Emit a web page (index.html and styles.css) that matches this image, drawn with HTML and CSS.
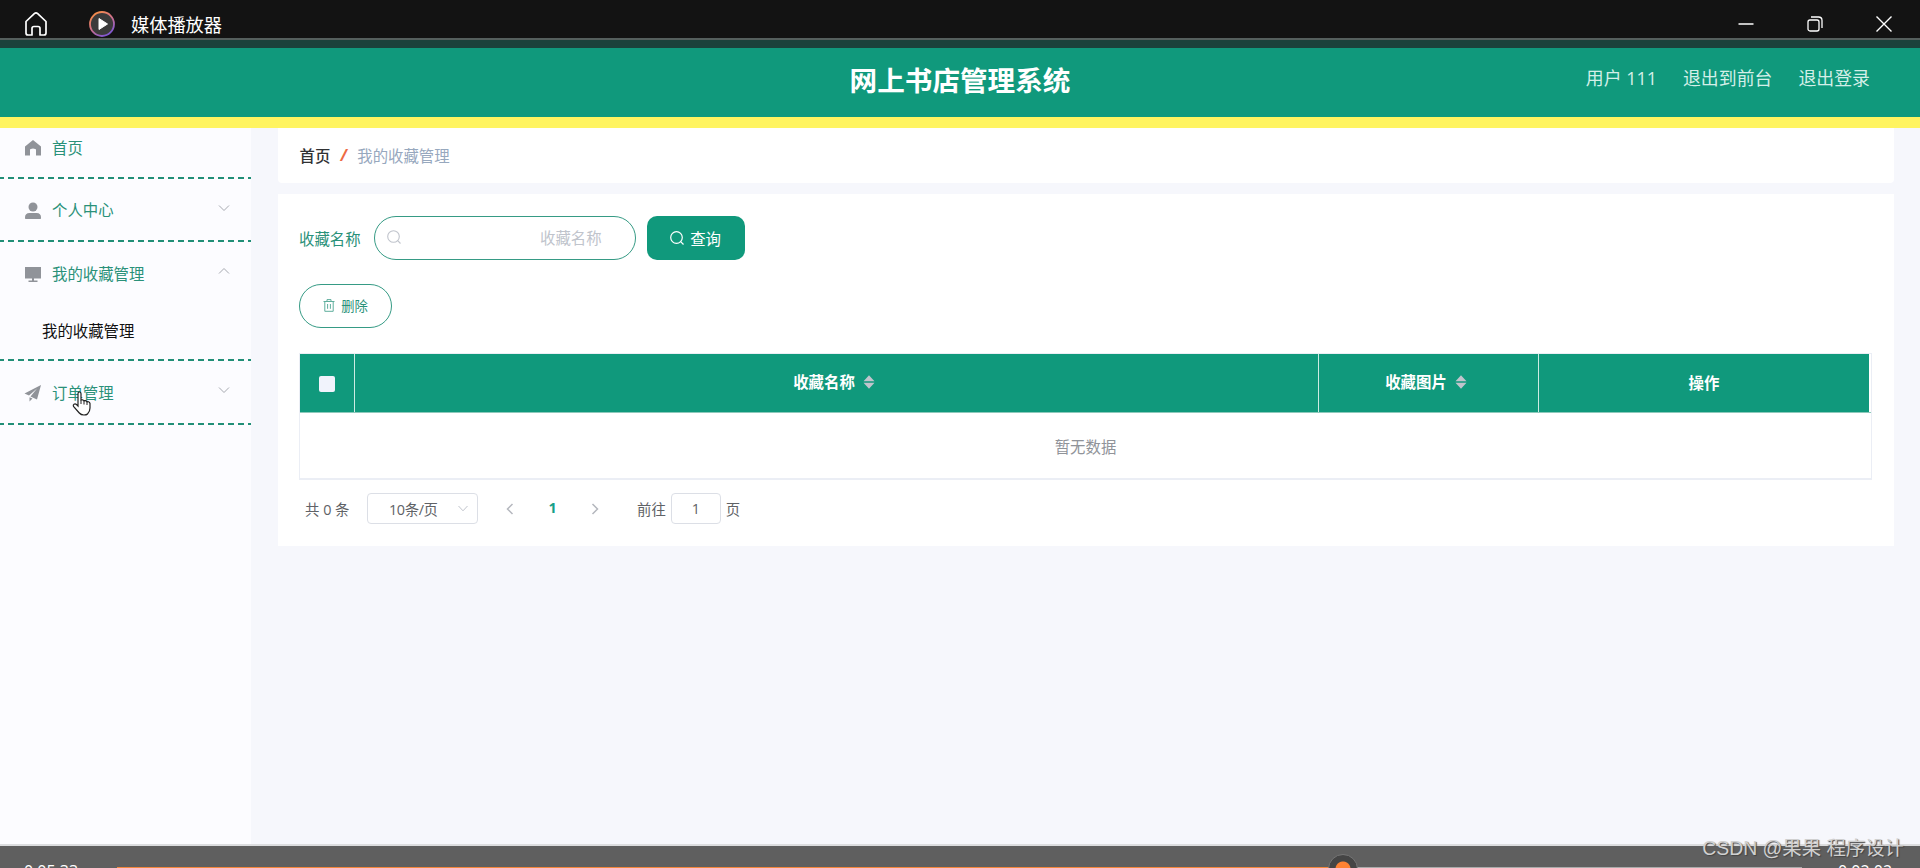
FILE: index.html
```
<!DOCTYPE html>
<html lang="zh-CN">
<head>
    <meta charset="UTF-8">
    <meta name="viewport" content="width=device-width, initial-scale=1.0">
    <title>网上书店管理系统</title>
    <link rel="stylesheet" href="styles.css">
</head>
<body>
    <div class="player">
        <div class="titlebar">
            <svg class="home" width="24" height="26" viewBox="0 0 24 26" fill="none" stroke="#fff" stroke-width="1.7" stroke-linejoin="round"><path d="M2 10.5 10.3 2.7Q12 1.200 13.700 2.700L22 10.500V22Q22 24 20 24H16V17.500Q16 15.500 14 15.500H10Q8 15.500 8 17.500V24H4Q2 24 2 22Z"/></svg>
            <svg class="app" width="26" height="26" viewBox="0 0 26 26">
                <defs>
                    <linearGradient id="ring" x1="0" y1="0" x2="0.600" y2="1"><stop offset="0" stop-color="#ff9436"/><stop offset="0.500" stop-color="#d87583"/><stop offset="1" stop-color="#8358d0"/></linearGradient>
                </defs>
                <circle cx="13" cy="13" r="12" fill="#3b3b3b" stroke="url(#ring)" stroke-width="1.800"/>
                <path d="M10 7.500V18.500L18.500 13Z" fill="#fff" stroke="#fff" stroke-linejoin="round"/>
            </svg>
            <span class="name">媒体播放器</span>
            <div class="win_btns">
                <svg width="16" height="16" viewBox="0 0 16 16"><path d="M0.500 8H15.500" stroke="#fff" stroke-width="1.500"/></svg>
                <svg width="16" height="16" viewBox="0 0 16 16" fill="none" stroke="#fff" stroke-width="1.300"><rect x="1" y="4" width="11" height="11" rx="2"/><path d="M4 1H11.500Q15 1 15 4.500V12"/></svg>
                <svg width="16" height="16" viewBox="0 0 16 16"><path d="M0.500 0.500 15.500 15.500M15.500 0.500 0.500 15.500" stroke="#fff" stroke-width="1.400"/></svg>
            </div>
        </div>

        <header class="header">
            <h1>网上书店管理系统</h1>
            <div class="user">
                <span>用户 111</span>
                <span>退出到前台</span>
                <span>退出登录</span>
            </div>
        </header>

        <div class="container">
            <ul class="menu">
                <li class="first">
                    <svg class="icon" width="18" height="18" viewBox="0 0 18 18"><path d="M9 1 17 7.500V16.500H12V11Q12 9.500 9 9.500T6 11V16.500H1V7.500Z" fill="#909399"/></svg>
                    <span>首页</span>
                </li>
                <li>
                    <svg class="icon" width="18" height="18" viewBox="0 0 18 18" fill="#909399"><circle cx="9" cy="5" r="4.500"/><path d="M1.500 17Q1 17 1 15.500Q1 11 5.500 11H12.500Q17 11 17 15.500Q17 17 16.500 17Z"/></svg>
                    <span>个人中心</span>
                    <svg class="arrow" width="12" height="8" viewBox="0 0 12 8"><path d="M1 1.500 6 6.500 11 1.500"/></svg>
                </li>
                <li class="opened">
                    <svg class="icon" width="18" height="18" viewBox="0 0 18 18" fill="#909399"><path d="M1 2H17V13.500H1ZM8 13.500H10V15.500H13.500V17H4.500V15.500H8Z"/></svg>
                    <span>我的收藏管理</span>
                    <svg class="arrow" width="12" height="8" viewBox="0 0 12 8"><path d="M1 6.500 6 1.500 11 6.500"/></svg>
                </li>
                <li class="sub">我的收藏管理</li>
                <li>
                    <svg class="icon" width="18" height="18" viewBox="0 0 18 18" fill="#909399"><path d="M17 1 0.500 9.500 5 11.500 13 4.500 6.500 12.500 13 15.500ZM5.500 13.200V17.500L8.500 14.500Z"/></svg>
                    <span>订单管理</span>
                    <svg class="arrow" width="12" height="8" viewBox="0 0 12 8"><path d="M1 1.500 6 6.500 11 1.500"/></svg>
                </li>
            </ul>

            <main class="main">
                <div class="breadcrumb">
                    <b>首页</b><i>/</i><span>我的收藏管理</span>
                </div>

                <div class="content">
                    <div class="search">
                        <label>收藏名称</label>
                        <div class="input">
                            <svg width="14" height="14" viewBox="0 0 14 14" fill="none" stroke="#c0c4cc" stroke-width="1.100"><circle cx="6.500" cy="6.500" r="5.800"/><path d="M10.700 10.700 13.500 13.500"/></svg>
                            <span>收藏名称</span>
                        </div>
                        <div class="btn_query">
                            <svg width="14" height="14" viewBox="0 0 14 14" fill="none" stroke="#fff" stroke-width="1.200"><circle cx="6.500" cy="6.500" r="5.800"/><path d="M10.700 10.700 13.500 13.500"/></svg>
                            <span>查询</span>
                        </div>
                    </div>

                    <div class="btn_del">
                        <svg width="12" height="13" viewBox="0 0 12 13" fill="none" stroke="#5fae9d"><path d="M0.500 2.500H11.500M4 2.500V0.600H8V2.500M1.800 2.500V12.300H10.200V2.500M4.600 5V9.800M7.400 5V9.800"/></svg>
                        <span>删除</span>
                    </div>

                    <div class="table">
                        <div class="thead">
                            <div class="th"><span class="checkbox"></span></div>
                            <div class="th sortable">收藏名称<svg width="12" height="14" viewBox="0 0 12 14" fill="#c0c4cc"><path d="M0.500 6.200 6 0.200 11.500 6.200ZM0.500 7.800 6 13.800 11.500 7.800Z"/></svg></div>
                            <div class="th sortable">收藏图片<svg width="12" height="14" viewBox="0 0 12 14" fill="#c0c4cc"><path d="M0.500 6.200 6 0.200 11.500 6.200ZM0.500 7.800 6 13.800 11.500 7.800Z"/></svg></div>
                            <div class="th">操作</div>
                        </div>
                        <div class="empty">暂无数据</div>
                    </div>

                    <div class="pagination">
                        <span class="total">共 0 条</span>
                        <div class="select">
                            <span>10条/页</span>
                            <svg width="10" height="7" viewBox="0 0 10 7" fill="none" stroke="#c0c4cc"><path d="M0.500 1 5 5.800 9.500 1"/></svg>
                        </div>
                        <svg class="prev" width="8" height="12" viewBox="0 0 8 12"><path d="M6.500 1 1.500 6 6.500 11"/></svg>
                        <b class="current">1</b>
                        <svg class="next" width="8" height="12" viewBox="0 0 8 12"><path d="M1.500 1 6.500 6 1.500 11"/></svg>
                        <span class="goto">前往</span>
                        <div class="page_input">1</div>
                        <span>页</span>
                    </div>
                </div>
            </main>
        </div>

        <!-- 播放进度条 -->
        <div class="controls">
            <span class="time">0:05:33</span>
            <div class="track"><div class="played"></div><div class="thumb"></div></div>
            <span class="time">0:02:02</span>
        </div>

        <svg class="cursor" width="20" height="26" viewBox="0 0 20 26"><path d="M6 14.500V2.800Q6 1 7.500 1T9 2.800V9.500Q9 8.600 10.500 8.800T12 10.300Q12.200 9.300 13.500 9.600T15 11.200Q15.300 10.300 16.500 10.700T18 12.500V17Q18 20.500 15.500 23Q14.500 24 12 24Q9 24 7.300 22L1.500 15.500Q0.800 14 2 13.200T4.500 13.500L6 15Z" fill="#fff" stroke="#222" stroke-width="1.200"/><path d="M9 9V13M12 10V13.500M15 11V14" stroke="#222"/></svg>
        <div class="watermark">CSDN @果果 程序设计</div>
    </div>
</body>
</html>
```
FILE: styles.css
```
* {
    margin: 0;
    padding: 0;
    box-sizing: border-box;
}
body {
    font-family: "Open Sans", "Noto Sans CJK SC", sans-serif;
    font-size: 15.4px;
    overflow: hidden;
}
li {
    list-style: none;
}
svg {
    display: block;
    flex-shrink: 0;
}
.player {
    position: relative;
    display: flex;
    flex-direction: column;
    width: 1920px;
    height: 868px;
    overflow: hidden;
    background: #f6f7fc;
}

/* 窗口标题栏 */
.titlebar {
    display: flex;
    align-items: center;
    height: 48px;
    padding: 0 28px 0 24px;
    border-bottom: 8px solid #1b423b;
    background: linear-gradient(#131313 38px, #555f5d 38px);
    color: #fff;
}
.titlebar .home {
    margin-top: 7px;
}
.titlebar .app {
    margin: 8px 16px 0 41px;
}
.titlebar .name {
    margin-top: 8px;
    font-size: 18.2px;
}
.win_btns {
    display: flex;
    gap: 53px;
    margin: 7px 0 0 auto;
}

/* 头部 */
.header {
    display: grid;
    grid-template-columns: 1fr auto 1fr;
    align-items: center;
    height: 80px;
    padding: 0 50px 8px;
    border-bottom: 11px solid #fff460;
    background: #10997c;
    color: #fff;
}
.header h1 {
    grid-column: 2;
    padding-top: 2px;
    font-size: 27.6px;
    line-height: 40px;
}
.user {
    display: flex;
    justify-content: flex-end;
    gap: 26px;
    padding-bottom: 3px;
    font-size: 17.9px;
    color: #d4efe8;
}

.container {
    display: flex;
    height: 716px;
}

/* 左侧菜单 */
.menu {
    width: 251px;
    background: #fcfcff;
    color: #2a9179;
}
.menu li {
    display: flex;
    align-items: center;
    height: 63px;
    padding: 0 21px 2px 24px;
    background: repeating-linear-gradient(90deg, #218f77 0 4px, transparent 4px 8px, #218f77 8px 10px) left bottom / 100% 2px no-repeat;
}
.menu li.first {
    height: 51px;
    padding-bottom: 13px;
}
.menu .icon {
    margin: 2px 10px 0 0;
}
.menu .arrow {
    margin: -4px 0 0 auto;
    fill: none;
    stroke: #a6a9b0;
}
.menu li.opened {
    height: 62px;
    padding-bottom: 0;
    background: none;
}
.menu li.sub {
    height: 57px;
    padding: 0 0 4px 42px;
    color: #111;
}
.menu li:last-child {
    height: 64px;
}

/* 右侧内容 */
.main {
    flex: 1;
    padding: 0 26px 0 26.500px;
}
.breadcrumb {
    display: flex;
    align-items: center;
    height: 55px;
    padding: 0 22px;
    border-radius: 0 0 4px 4px;
    background: #fff;
    color: #97a8be;
}
.breadcrumb b {
    color: #303133;
    font-weight: 500;
}
.breadcrumb i {
    width: 27px;
    text-align: center;
    font-weight: bold;
    color: #ee6a44;
}
.content {
    height: 352px;
    margin-top: 11px;
    padding: 22px 22px 0 21.500px;
    background: #fff;
}
.search {
    display: flex;
    align-items: center;
    color: #2a9179;
}
.input {
    display: flex;
    justify-content: space-between;
    align-items: center;
    width: 262px;
    height: 44px;
    margin: 0 11px 0 13px;
    padding: 0 33px 2px 12px;
    border: 1px solid #369b85;
    border-radius: 22px;
    color: #c0c4cc;
}
.btn_query {
    display: flex;
    justify-content: center;
    align-items: center;
    gap: 6px;
    width: 98px;
    height: 44px;
    border-radius: 10px;
    background: #10997c;
    color: #fff;
}
.btn_del {
    display: flex;
    justify-content: center;
    align-items: center;
    gap: 6px;
    width: 93px;
    height: 44px;
    margin-top: 24px;
    padding-bottom: 1px;
    border: 1px solid #369b85;
    border-radius: 22px;
    font-size: 13.3px;
    color: #2a9179;
}
.table {
    height: 127px;
    margin-top: 25px;
    border: 1px solid #ebeef5;
    border-bottom-width: 2px;
}
.thead {
    display: grid;
    grid-template-columns: 55px 964px 220px 330px;
    height: 59px;
    border-bottom: 1px solid #8dc9bb;
    font-weight: bold;
    color: #fff;
}
.th {
    display: flex;
    justify-content: center;
    align-items: center;
    gap: 8px;
    padding-bottom: 2px;
    border-right: 1px solid #cdebe3;
    background: #10997c;
}
.th.sortable {
    padding: 0 5px 3px 0;
}
.th:last-child {
    border-right: 0;
}
.checkbox {
    width: 16px;
    height: 16px;
    margin-top: 3px;
    border-radius: 2px;
    background: #f1f3fc;
}
.empty {
    display: flex;
    justify-content: center;
    align-items: center;
    height: 65px;
    padding-top: 2px;
    color: #909399;
}
.pagination {
    display: flex;
    align-items: center;
    height: 31px;
    margin-top: 13px;
    padding-left: 6px;
    font-size: 14.4px;
    color: #606266;
}
.total {
    width: 62px;
    padding-bottom: 1px;
}
.select {
    display: flex;
    justify-content: space-between;
    align-items: center;
    width: 111px;
    height: 31px;
    padding: 0 9px 0 21px;
    border: 1px solid #dcdfe6;
    border-radius: 4px;
}
.select span {
    letter-spacing: -0.4px;
}
.prev, .next {
    fill: none;
    stroke: #b4b7be;
    stroke-width: 1.5;
}
.prev {
    margin-left: 28px;
}
.current {
    width: 77px;
    padding-bottom: 2px;
    text-align: center;
    color: #16a089;
}
.goto {
    margin-left: 38px;
}
.page_input {
    width: 50px;
    height: 31px;
    margin: 0 5px 0 5px;
    border: 1px solid #dcdfe6;
    border-radius: 4px;
    line-height: 29px;
    text-align: center;
}

/* 底部控制条 */
.controls {
    display: flex;
    flex-shrink: 0;
    height: 24px;
    padding: 0 24px;
    border-top: 2px solid #dcdddf;
    background: #5f5f5f;
    color: #fff;
}
.time {
    width: 58px;
    padding-top: 14px;
    font-size: 16px;
    line-height: 22px;
    white-space: nowrap;
}
.track {
    position: relative;
    width: 1685px;
    height: 3px;
    margin: 21px 36px 0 35px;
    background: #aaa;
}
.played {
    width: 1226px;
    height: 3px;
    background: #f4873c;
}
.thumb {
    position: absolute;
    left: 1211px;
    top: -13px;
    width: 30px;
    height: 30px;
    border: 1px solid #757575;
    border-radius: 50%;
    background: radial-gradient(circle, #ff8233 7px, #454545 8px);
}
.cursor {
    position: absolute;
    left: 72px;
    top: 391px;
}
.watermark {
    position: absolute;
    right: 16px;
    top: 834px;
    font-family: "Liberation Sans", "Noto Sans CJK SC", sans-serif;
    font-size: 19.4px;
    line-height: 28px;
    color: #d0d0d0;
    text-shadow: 1px 1px 1px #444;
}
```
